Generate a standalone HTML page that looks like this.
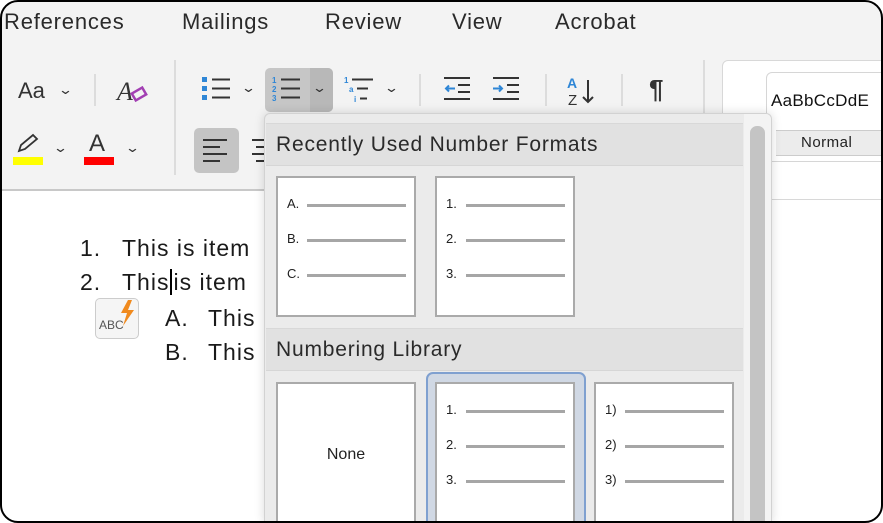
<!DOCTYPE html>
<html><head><style>
*{margin:0;padding:0;box-sizing:border-box}
body{width:883px;height:523px;background:#fff;position:relative;overflow:hidden;font-family:"Liberation Sans",Arial,sans-serif}
.frame{position:absolute;left:0;top:0;width:883px;height:523px;border-radius:18px;overflow:hidden;background:#fff}
.bord{position:absolute;left:0;top:0;width:883px;height:523px;border:2px solid #000;border-radius:18px;pointer-events:none}
.rib{position:absolute;left:0;top:0;width:883px;height:191px;background:#f3f3f3;border-bottom:2px solid #c8c8c8}
.tab{position:absolute;top:9px;font-size:22px;letter-spacing:0.8px;color:#2a2a2a}
.a{position:absolute}
.sep{position:absolute;width:2px;background:#dcdcdc}
.chev{position:absolute;font-size:13px;color:#333;transform:scaleX(1.4)}
.doc{position:absolute;font-size:23px;letter-spacing:1px;color:#1a1a1a}
.dd{position:absolute;left:264px;top:113px;width:508px;height:410px;background:#ebebeb;border:1px solid #d2d2d2;border-bottom:none;border-radius:6px 6px 0 0;box-shadow:0 0 10px rgba(0,0,0,.15);overflow:hidden}
.hdr{position:absolute;left:1px;width:477px;height:43px;background:#e1e1e1;border-top:1px solid #d8d8d8;border-bottom:1px solid #d6d6d6;font-size:21px;letter-spacing:0.8px;color:#2a2a2a;padding:9px 0 0 10px}
.box{position:absolute;width:140px;height:141px;background:#fff;border:2px solid #aaa}
.ln{position:absolute;font-size:13px;color:#222;left:9px}
.ln span{position:absolute;top:8px;height:3px;background:#a6a6a6;width:99px}
</style></head><body>
<div class="frame">
<div class="rib">
<div class="tab" style="left:4px">References</div>
<div class="tab" style="left:182px">Mailings</div>
<div class="tab" style="left:325px">Review</div>
<div class="tab" style="left:452px">View</div>
<div class="tab" style="left:555px">Acrobat</div>
<div class="a" style="left:18px;top:78px;font-size:22px;color:#333">Aa</div>
<div class="chev" style="left:60px;top:82px">⌄</div>
<div class="sep" style="left:94px;top:74px;height:32px"></div>
<svg class="a" style="left:115px;top:74px" width="36" height="34"><text x="2" y="26" font-size="26" font-family="Liberation Serif" font-style="italic" fill="#333">A</text><rect x="18" y="16" width="12" height="8" fill="none" stroke="#a23fb3" stroke-width="2.5" transform="rotate(-30 24 20)"/></svg>
<div class="sep" style="left:174px;top:60px;height:115px"></div>
<svg class="a" style="left:200px;top:74px" width="40" height="30"><g fill="#2e86d6"><rect x="2" y="3" width="5" height="5"/><rect x="2" y="12" width="5" height="5"/><rect x="2" y="21" width="5" height="5"/></g><g stroke="#333" stroke-width="2"><line x1="12" y1="5.5" x2="30" y2="5.5"/><line x1="12" y1="14.5" x2="30" y2="14.5"/><line x1="12" y1="23.5" x2="30" y2="23.5"/></g></svg>
<div class="chev" style="left:243px;top:80px">⌄</div>
<div class="a" style="left:265px;top:68px;width:68px;height:44px;background:#c6c6c6;border-radius:5px"></div>
<div class="a" style="left:310px;top:68px;width:23px;height:44px;background:#b8b8b8;border-radius:0 5px 5px 0"></div>
<svg class="a" style="left:270px;top:74px" width="36" height="30"><g fill="#2e86d6" font-size="8" font-weight="bold"><text x="2" y="9">1</text><text x="2" y="18">2</text><text x="2" y="27">3</text></g><g stroke="#333" stroke-width="2"><line x1="11" y1="5.5" x2="30" y2="5.5"/><line x1="11" y1="14.5" x2="30" y2="14.5"/><line x1="11" y1="23.5" x2="30" y2="23.5"/></g></svg>
<div class="chev" style="left:314px;top:80px">⌄</div>
<svg class="a" style="left:343px;top:74px" width="36" height="32"><g fill="#2e86d6" font-size="8" font-weight="bold"><text x="1" y="9">1</text><text x="6" y="18">a</text><text x="11" y="28">i</text></g><g stroke="#333" stroke-width="2"><line x1="9" y1="5.5" x2="30" y2="5.5"/><line x1="14" y1="14.5" x2="25" y2="14.5"/><line x1="17" y1="24.5" x2="24" y2="24.5"/></g></svg>
<div class="chev" style="left:386px;top:80px">⌄</div>
<div class="sep" style="left:419px;top:74px;height:32px"></div>
<svg class="a" style="left:444px;top:76px" width="30" height="28"><g stroke="#333" stroke-width="2"><line x1="0" y1="2" x2="26" y2="2"/><line x1="14" y1="9" x2="26" y2="9"/><line x1="14" y1="16" x2="26" y2="16"/><line x1="0" y1="23" x2="26" y2="23"/></g><path d="M2 12.5h9M5 9.5l-3 3 3 3" stroke="#2e86d6" stroke-width="2" fill="none"/></svg>
<svg class="a" style="left:493px;top:76px" width="30" height="28"><g stroke="#333" stroke-width="2"><line x1="0" y1="2" x2="26" y2="2"/><line x1="14" y1="9" x2="26" y2="9"/><line x1="14" y1="16" x2="26" y2="16"/><line x1="0" y1="23" x2="26" y2="23"/></g><path d="M0 12.5h9M6 9.5l3 3-3 3" stroke="#2e86d6" stroke-width="2" fill="none"/></svg>
<div class="sep" style="left:545px;top:74px;height:32px"></div>
<svg class="a" style="left:566px;top:74px" width="36" height="34"><text x="1" y="14" font-size="14" font-weight="bold" fill="#2e86d6">A</text><text x="2" y="31" font-size="15" fill="#333">Z</text><path d="M22 6v22M17 23l5 5 5-5" stroke="#333" stroke-width="2" fill="none"/></svg>
<div class="sep" style="left:621px;top:74px;height:32px"></div>
<div class="a" style="left:649px;top:74px;font-size:26px;font-weight:bold;color:#333">¶</div>
<div class="sep" style="left:703px;top:60px;height:130px"></div>
<div class="a" style="left:722px;top:60px;width:170px;height:140px;background:#fff;border:1px solid #d8d8d8;border-radius:6px"></div>
<div class="a" style="left:766px;top:72px;width:130px;height:90px;background:#fff;border:1px solid #d6d6d6;border-radius:6px"></div>
<div class="a" style="left:771px;top:91px;font-size:17px;letter-spacing:0.3px;color:#111">AaBbCcDdE</div>
<div class="a" style="left:776px;top:130px;width:110px;height:26px;background:#ececec;border-top:1px solid #ccc;border-bottom:1px solid #ccc;font-size:15px;letter-spacing:0.5px;color:#222;padding:3px 0 0 25px">Normal</div>
<svg class="a" style="left:13px;top:133px" width="32" height="22"><path d="M6 18l2-6 12-10 4 4-12 10z" fill="none" stroke="#333" stroke-width="1.8"/></svg>
<div class="a" style="left:13px;top:157px;width:30px;height:8px;background:#ffff00"></div>
<div class="chev" style="left:55px;top:140px">⌄</div>
<div class="a" style="left:89px;top:130px;font-size:24px;color:#333">A</div>
<div class="a" style="left:84px;top:157px;width:30px;height:8px;background:#ff0000"></div>
<div class="chev" style="left:127px;top:140px">⌄</div>
<div class="a" style="left:194px;top:128px;width:45px;height:45px;background:#c4c4c4;border-radius:5px"></div>
<svg class="a" style="left:203px;top:138px" width="28" height="26"><g stroke="#333" stroke-width="2"><line x1="0" y1="2" x2="24" y2="2"/><line x1="0" y1="9" x2="17" y2="9"/><line x1="0" y1="16" x2="24" y2="16"/><line x1="0" y1="23" x2="17" y2="23"/></g></svg>
<svg class="a" style="left:252px;top:138px" width="14" height="26"><g stroke="#333" stroke-width="2"><line x1="0" y1="2" x2="14" y2="2"/><line x1="4" y1="9" x2="14" y2="9"/><line x1="0" y1="16" x2="14" y2="16"/><line x1="4" y1="23" x2="14" y2="23"/></g></svg>
</div>
<div class="doc" style="left:80px;top:235px">1.</div><div class="doc" style="left:122px;top:235px">This is item</div>
<div class="doc" style="left:80px;top:269px">2.</div><div class="doc" style="left:122px;top:269px">This<span style="display:inline-block;width:2px;height:26px;background:#000;vertical-align:-5px;margin:0 1px"></span>is item</div>
<div class="doc" style="left:165px;top:305px">A.</div><div class="doc" style="left:208px;top:305px">This</div>
<div class="doc" style="left:165px;top:339px">B.</div><div class="doc" style="left:208px;top:339px">This</div>
<div class="a" style="left:95px;top:298px;width:44px;height:41px;border:1px solid #ccc;border-radius:5px;background:#f5f5f5"></div>
<div class="a" style="left:99px;top:318px;font-size:12px;color:#555">ABC</div>
<svg class="a" style="left:118px;top:300px" width="18" height="28"><path d="M10 0L3 13h6l-4 13 11-16h-6l4-10z" fill="#f08a1e"/></svg>
<div class="dd">
<div class="hdr" style="top:9px">Recently Used Number Formats</div>
<div class="box" style="left:11px;top:62px">
<div class="ln" style="top:18px">A.<span style="left:20px"></span></div>
<div class="ln" style="top:53px">B.<span style="left:20px"></span></div>
<div class="ln" style="top:88px">C.<span style="left:20px"></span></div>
</div>
<div class="box" style="left:170px;top:62px">
<div class="ln" style="top:18px">1.<span style="left:20px"></span></div>
<div class="ln" style="top:53px">2.<span style="left:20px"></span></div>
<div class="ln" style="top:88px">3.<span style="left:20px"></span></div>
</div>
<div class="hdr" style="top:214px">Numbering Library</div>
<div class="box" style="left:11px;top:268px"><div style="position:absolute;left:0;right:0;top:62px;text-align:center;font-size:16px;color:#222">None</div></div>
<div class="a" style="left:161px;top:258px;width:160px;height:160px;background:#d0d8e4;border:2px solid #7fa0d0;border-radius:7px"></div>
<div class="box" style="left:170px;top:268px">
<div class="ln" style="top:18px">1.<span style="left:20px"></span></div>
<div class="ln" style="top:53px">2.<span style="left:20px"></span></div>
<div class="ln" style="top:88px">3.<span style="left:20px"></span></div>
</div>
<div class="box" style="left:329px;top:268px">
<div class="ln" style="top:18px">1)<span style="left:20px"></span></div>
<div class="ln" style="top:53px">2)<span style="left:20px"></span></div>
<div class="ln" style="top:88px">3)<span style="left:20px"></span></div>
</div>
<div class="a" style="left:479px;top:0;width:28px;height:410px;background:#f3f3f3"></div>
<div class="a" style="left:485px;top:12px;width:15px;height:410px;background:#c4c4c4;border-radius:7px"></div>
</div>
</div>
<div class="bord"></div>
</body></html>
